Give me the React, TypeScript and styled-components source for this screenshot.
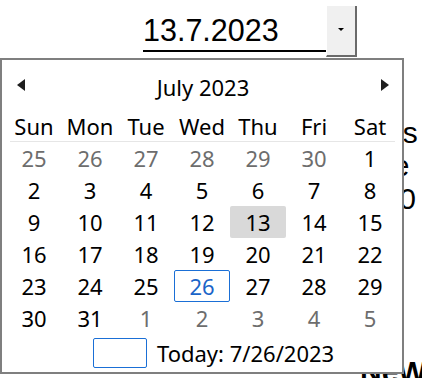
import React from "react";
import styled, { createGlobalStyle } from "styled-components";

const GlobalStyle = createGlobalStyle`
  html, body {
    margin: 0;
    padding: 0;
    background: #ffffff;
    overflow: hidden;
  }
`;

const weekDays = ["Sun", "Mon", "Tue", "Wed", "Thu", "Fri", "Sat"];

type Day = { label: number; muted?: boolean; selected?: boolean; today?: boolean };

const buildDays = (): Day[] => {
  const days: Day[] = [];
  for (let d = 25; d <= 30; d++) days.push({ label: d, muted: true });
  for (let d = 1; d <= 31; d++) {
    days.push({ label: d, selected: d === 13, today: d === 26 });
  }
  for (let d = 1; d <= 5; d++) days.push({ label: d, muted: true });
  return days;
};

export default function App() {
  const days = buildDays();

  return (
    <Page>
      <GlobalStyle />
      <FieldRow>
        <DateText>13.7.2023</DateText>
        <DropButton>
          <svg width="6" height="3" viewBox="0 0 6 3">
            <path d="M0 0 H6 L3 3 Z" fill="#000" />
          </svg>
        </DropButton>
      </FieldRow>
      <BehindText>
        <div>Pos</div>
        <div>Pie</div>
        <div>100</div>
      </BehindText>
      <BehindBold>NeW</BehindBold>

      <Popup>
        <Header>
          <NavArrow viewBox="0 0 8 12">
            <path d="M8 0 V12 L0 6 Z" />
          </NavArrow>
          <MonthTitle>July 2023</MonthTitle>
          <NavArrow viewBox="0 0 8 12">
            <path d="M0 0 V12 L8 6 Z" />
          </NavArrow>
        </Header>
        <WeekRow>
          {weekDays.map((w) => (
            <WeekCell key={w}>{w}</WeekCell>
          ))}
        </WeekRow>
        <Divider />
        <DayGrid>
          {days.map((d, i) => (
            <DayCell key={i} muted={d.muted} selected={d.selected} today={d.today}>
              {d.label}
            </DayCell>
          ))}
        </DayGrid>
        <Footer>
          <TodayBox />
          <TodayLabel>Today: 7/26/2023</TodayLabel>
        </Footer>
      </Popup>
    </Page>
  );
}

const Page = styled.div`
  position: relative;
  width: 422px;
  height: 378px;
  overflow: hidden;
  font-family: "Liberation Sans", Arial, sans-serif;
  color: #000;
`;

const FieldRow = styled.div`
  display: flex;
  align-items: flex-start;
  padding: 6px 0 0 143px;
`;

const DateText = styled.div`
  width: 183px;
  height: 46px;
  box-sizing: border-box;
  border-bottom: 2px solid #000;
  font-size: 30.5px;
  line-height: 44px;
  padding-top: 2px;
`;

const DropButton = styled.div`
  width: 31px;
  height: 51px;
  box-sizing: border-box;
  background: #f0f0f0;
  border-right: 2px solid #6a6a6a;
  border-bottom: 2px solid #6a6a6a;
  border-left: 1px solid #ffffff;
  display: flex;
  align-items: center;
  justify-content: center;
  padding-bottom: 2px;
`;

const BehindText = styled.div`
  padding: 59px 0 0 366px;
  font-size: 30px;
  line-height: 33px;
`;

const BehindBold = styled.div`
  position: absolute;
  left: 360px;
  top: 355px;
  font-size: 30px;
  font-weight: bold;
`;

const Popup = styled.div`
  position: absolute;
  left: 0;
  top: 58px;
  width: 404px;
  height: 316px;
  box-sizing: border-box;
  border: 2px solid #7f7f7f;
  background: #ffffff;
  font-family: "Noto Sans", "Open Sans", sans-serif;
  font-size: 22px;
  display: flex;
  flex-direction: column;
`;

const Header = styled.div`
  height: 50px;
  display: flex;
  align-items: center;
  justify-content: space-between;
  padding: 2px 13px 0 15px;
  box-sizing: border-box;
`;

const NavArrow = styled.svg`
  width: 8px;
  height: 12px;
  fill: #1e1e1e;
  margin-top: -2px;
`;

const MonthTitle = styled.div`
  line-height: 1;
  padding-top: 2px;
`;

const WeekRow = styled.div`
  display: grid;
  grid-template-columns: repeat(7, 56px);
  padding-left: 4px;
  height: 31px;
  align-items: center;
`;

const WeekCell = styled.div`
  text-align: center;
  line-height: 1;
`;

const Divider = styled.div`
  height: 1px;
  background: #e6e6e6;
  margin: 0 7px 0 8px;
`;

const DayGrid = styled.div`
  display: grid;
  grid-template-columns: repeat(7, 56px);
  grid-auto-rows: 32px;
  padding-left: 4px;
`;

const DayCell = styled.div<{ muted?: boolean; selected?: boolean; today?: boolean }>`
  display: flex;
  align-items: center;
  justify-content: center;
  box-sizing: border-box;
  border-radius: 2px;
  color: ${(p) => (p.today ? "#1a64c8" : p.muted ? "#6d6d6d" : "#000")};
  background: ${(p) => (p.selected ? "#d9d9d9" : "transparent")};
  border: 1px solid ${(p) => (p.today ? "#1a6fd6" : "transparent")};
  line-height: 1;
`;

const Footer = styled.div`
  flex: 1;
  display: flex;
  align-items: center;
  padding-left: 91px;
  gap: 10px;
`;

const TodayBox = styled.div`
  width: 54px;
  height: 30px;
  box-sizing: border-box;
  border: 1px solid #1a6fd6;
  border-radius: 2px;
`;

const TodayLabel = styled.div`
  line-height: 1;
`;
